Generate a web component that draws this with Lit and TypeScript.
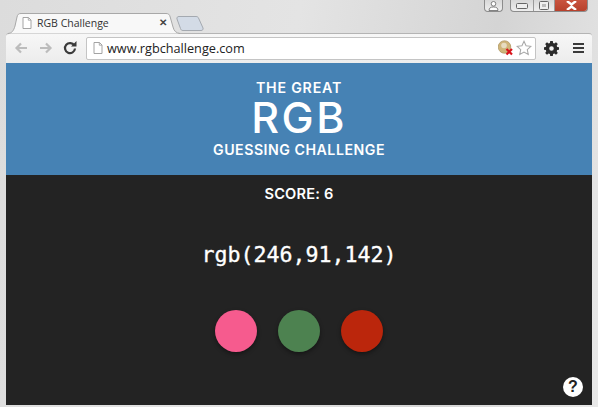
import { LitElement, html, css, svg } from "lit";
import { customElement } from "lit/decorators.js";

const pageIcon = (w: number, h: number) => html`<svg width=${w} height=${h} viewBox="0 0 10 12"><path d="M1 .5h5.500L9 3v8.500H1z" fill="#fff" stroke="#9a9a9a" stroke-width=".9"/><path d="M6.300.7V3.200H8.800" fill="none" stroke="#9a9a9a" stroke-width=".8"/></svg>`;

@customElement("app-root")
export class AppRoot extends LitElement {
  static styles = css`
    :host { display: block; width: 598px; height: 407px; overflow: hidden; }
    * { box-sizing: border-box; }
    .frame { width: 598px; height: 407px; display: flex; flex-direction: column; padding: 0 6px 2px 6px;
      background: linear-gradient(100deg, #dcdcdc 0%, #e4e4e4 45%, #d4d4d4 75%, #e8e8e8 100%); position: relative; }
    .titlebar { height: 33px; flex: none; display: flex; align-items: flex-end; padding-left: 2px; position: relative; }
    .tab { flex: none; display: block; margin-bottom: -1px; position: relative; z-index: 1; }
    .tab-content { position: absolute; z-index: 2; left: 16px; bottom: 1px; height: 19px; width: 145px; display: flex; align-items: center; gap: 5px;
      font: 10.500px "Open Sans", sans-serif; color: #333; }
    .tab-title { flex: 1; }
    .tab-x { font: bold 10px "Liberation Sans", sans-serif; color: #444; }
    .newtab { flex: none; display: block; margin-left: -5px; margin-bottom: 2px; }
    .winctl { position: absolute; top: 0; right: 4px; display: flex; gap: 7px; }
    .group { display: flex; height: 12px; border: 1px solid #8c8c8c; border-top: none; border-radius: 0 0 4px 4px; overflow: hidden;
      background: linear-gradient(#d8d8d8, #eeeeee); }
    .wb { height: 100%; display: flex; align-items: center; justify-content: center; border-right: 1px solid #9a9a9a; }
    .wb:last-child { border-right: none; }
    .profile { width: 19px; }
    .min { width: 23px; }
    .max { width: 21px; }
    .close { width: 32px; background: linear-gradient(#c9543f, #b8412c); }
    .toolbar { height: 30px; flex: none; display: flex; align-items: center; background: linear-gradient(#f7f7f7, #ececec);
      border-top: 1px solid #b4b4b4; padding: 0 8px 1px 8px; border-radius: 3px 3px 0 0; }
    .nav { width: 14px; height: 14px; flex: none; }
    .nav + .nav { margin-left: 11px; }
    .nav.reload { margin-left: 10px; margin-right: 9px; }
    .omni { flex: 1; height: 23px; background: #fff; border: 1px solid #c4c4c4; border-radius: 2px; display: flex; align-items: center;
      padding: 0 3px 0 6px; font: 12.700px "Open Sans", sans-serif; color: #222; }
    .url { margin-left: 4px; flex: 1; }
    .ext { margin-right: 2px; }
    .gear { margin-left: 8px; flex: none; }
    .menu { margin-left: 14px; width: 11px; display: flex; flex-direction: column; gap: 2px; flex: none; }
    .menu i { display: block; height: 2px; background: #3a3a3a; }
    .hero { height: 112px; flex: none; background: #4682b4; color: #fff; display: flex; flex-direction: column; align-items: center;
      font-family: Inter, "Open Sans", sans-serif; font-weight: 600; padding-top: 16px; }
    .l1 { font-size: 14.200px; line-height: 17px; letter-spacing: .8px; }
    .l2 { font-size: 43px; line-height: 43px; letter-spacing: 2.500px; font-weight: 500; }
    .l3 { font-size: 14.200px; line-height: 17px; letter-spacing: .5px; margin-top: 2px; }
    .game { flex: 1; background: #232323; color: #fff; display: flex; flex-direction: column; align-items: center; position: relative; }
    .score { font: 600 14.600px/18px Inter, sans-serif; margin-top: 10px; letter-spacing: .2px; }
    .rgb { font: 21.600px/28px "DejaVu Sans Mono", monospace; margin-top: 38px; -webkit-text-stroke: .35px #fff; }
    .dots { display: flex; gap: 21px; margin-top: 41px; }
    .dot { width: 42px; height: 42px; border-radius: 50%; box-shadow: 0 2px 4px rgba(0,0,0,.4); }
    .help { position: absolute; right: 9px; bottom: 8px; width: 20px; height: 20px; border-radius: 50%; background: #fff; color: #222;
      font: bold 16px/20px "Liberation Sans", sans-serif; text-align: center; }
  `;

  render() {
    const gear = svg`<path fill="#2b2b2b" fill-rule="evenodd" d="M6.200 0h2.600l.3 1.900 1.200.5L12 1.300l1.800 1.800-1.100 1.600.5 1.200 1.900.3v2.600l-1.900.3-.5 1.200 1.100 1.600L12 13.700l-1.600-1.100-1.300.5-.3 1.900H6.200l-.3-1.900-1.300-.5L3 13.700 1.200 11.900l1.100-1.600-.5-1.200L0 8.800V6.200l1.800-.3.500-1.200L1.200 3.100 3 1.300l1.600 1.100 1.300-.5zM7.500 5.200a2.300 2.300 0 1 0 0 4.600 2.300 2.300 0 0 0 0-4.600z"/>`;
    return html`
      <div class="frame">
        <div class="titlebar">
          <svg class="tab" width="172" height="22" viewBox="0 0 172 22">
            <path d="M0 21.500C4 21 5.500 19 7 14L9 5C9.600 2.500 10.500 1.500 13 1.500H158C160.500 1.500 161.500 2.500 162.200 5L165 15C166 19 168 21 172 21.500" fill="#f8f8f8" stroke="#a8a8a8"/>
          </svg>
          <div class="tab-content">
            ${pageIcon(10, 12)}<span class="tab-title">RGB Challenge</span><span class="tab-x">✕</span>
          </div>
          <svg class="newtab" width="29" height="15" viewBox="0 0 29 15">
            <path d="M2 3C1.500 1.500 2.500 .5 4 .5H21C22.500 .5 23 1 23.500 2L28 12C28.500 13.500 27.500 14.500 26 14.500H8C6.500 14.500 6 14 5.500 12.500z" fill="#d3dbe6" stroke="#a4a9b0"/>
          </svg>
          <div class="winctl">
            <div class="group profile"><div class="wb profile">
              <svg width="11" height="10" viewBox="0 0 11 10"><circle cx="5.500" cy="2.800" r="2.300" fill="#fff" stroke="#666" stroke-width=".8"/><path d="M1 9.500c0-2.500 1.500-3.500 4.500-3.500s4.500 1 4.500 3.500z" fill="#fff" stroke="#666" stroke-width=".8"/></svg>
            </div></div>
            <div class="group">
              <div class="wb min"><svg width="12" height="6" viewBox="0 0 12 6"><rect x=".5" y=".5" width="11" height="5" rx="1" fill="#eee" stroke="#666"/></svg></div>
              <div class="wb max"><svg width="10" height="9" viewBox="0 0 10 9"><rect x=".5" y=".5" width="9" height="8" rx="1" fill="#eee" stroke="#666"/><rect x="3" y="3" width="4" height="3" fill="#bbb"/></svg></div>
              <div class="wb close"><svg width="13" height="9" viewBox="0 0 13 9"><path d="M2 0l4.500 3.500L11 0M2 9l4.500-3.500L11 9" fill="none" stroke="#fff" stroke-width="2.400"/></svg></div>
            </div>
          </div>
        </div>
        <div class="toolbar">
          <svg class="nav" viewBox="0 0 14 14"><path d="M13 7H3M7 2.500 2.500 7 7 11.500" fill="none" stroke="#bcbcbc" stroke-width="2.200"/></svg>
          <svg class="nav" viewBox="0 0 14 14"><path d="M1 7h10M7 2.500 11.500 7 7 11.500" fill="none" stroke="#bcbcbc" stroke-width="2.200"/></svg>
          <svg class="nav reload" viewBox="0 0 14 14"><path d="M11.300 4.500A5 5 0 1 0 12 7.500" fill="none" stroke="#3a3a3a" stroke-width="2.200"/><path d="M8 5.500h5.500V0z" fill="#3a3a3a"/></svg>
          <div class="omni">
            ${pageIcon(10, 12)}<span class="url">www.rgbchallenge.com</span>
            <svg class="ext" width="16" height="16" viewBox="0 0 16 16"><circle cx="6.500" cy="7" r="6.300" fill="#cfb57a" stroke="#a58c55" stroke-width=".6"/><circle cx="6" cy="5.500" r="2.800" fill="#e7dcc0"/><path d="M8.500 9l5.500 5.500m0-5.500-5.500 5.500" stroke="#d8131b" stroke-width="2.200"/></svg>
            <svg width="16" height="16" viewBox="0 0 18 18"><path d="M9 1.500l2.300 5 5.400.6-4 3.700 1.100 5.400L9 13.500l-4.800 2.700 1.100-5.400-4-3.700 5.400-.6z" fill="#fff" stroke="#a8a8a8" stroke-width="1.200"/></svg>
          </div>
          <svg class="gear" width="15" height="15" viewBox="0 0 15 15">${gear}</svg>
          <div class="menu"><i></i><i></i><i></i></div>
        </div>
        <div class="hero">
          <div class="l1">THE GREAT</div>
          <div class="l2">RGB</div>
          <div class="l3">GUESSING CHALLENGE</div>
        </div>
        <div class="game">
          <div class="score">SCORE: 6</div>
          <div class="rgb">rgb(246,91,142)</div>
          <div class="dots">
            <div class="dot" style="background:rgb(246,91,142)"></div>
            <div class="dot" style="background:#4d8250"></div>
            <div class="dot" style="background:#bb260c"></div>
          </div>
          <div class="help">?</div>
        </div>
      </div>
    `;
  }
}
